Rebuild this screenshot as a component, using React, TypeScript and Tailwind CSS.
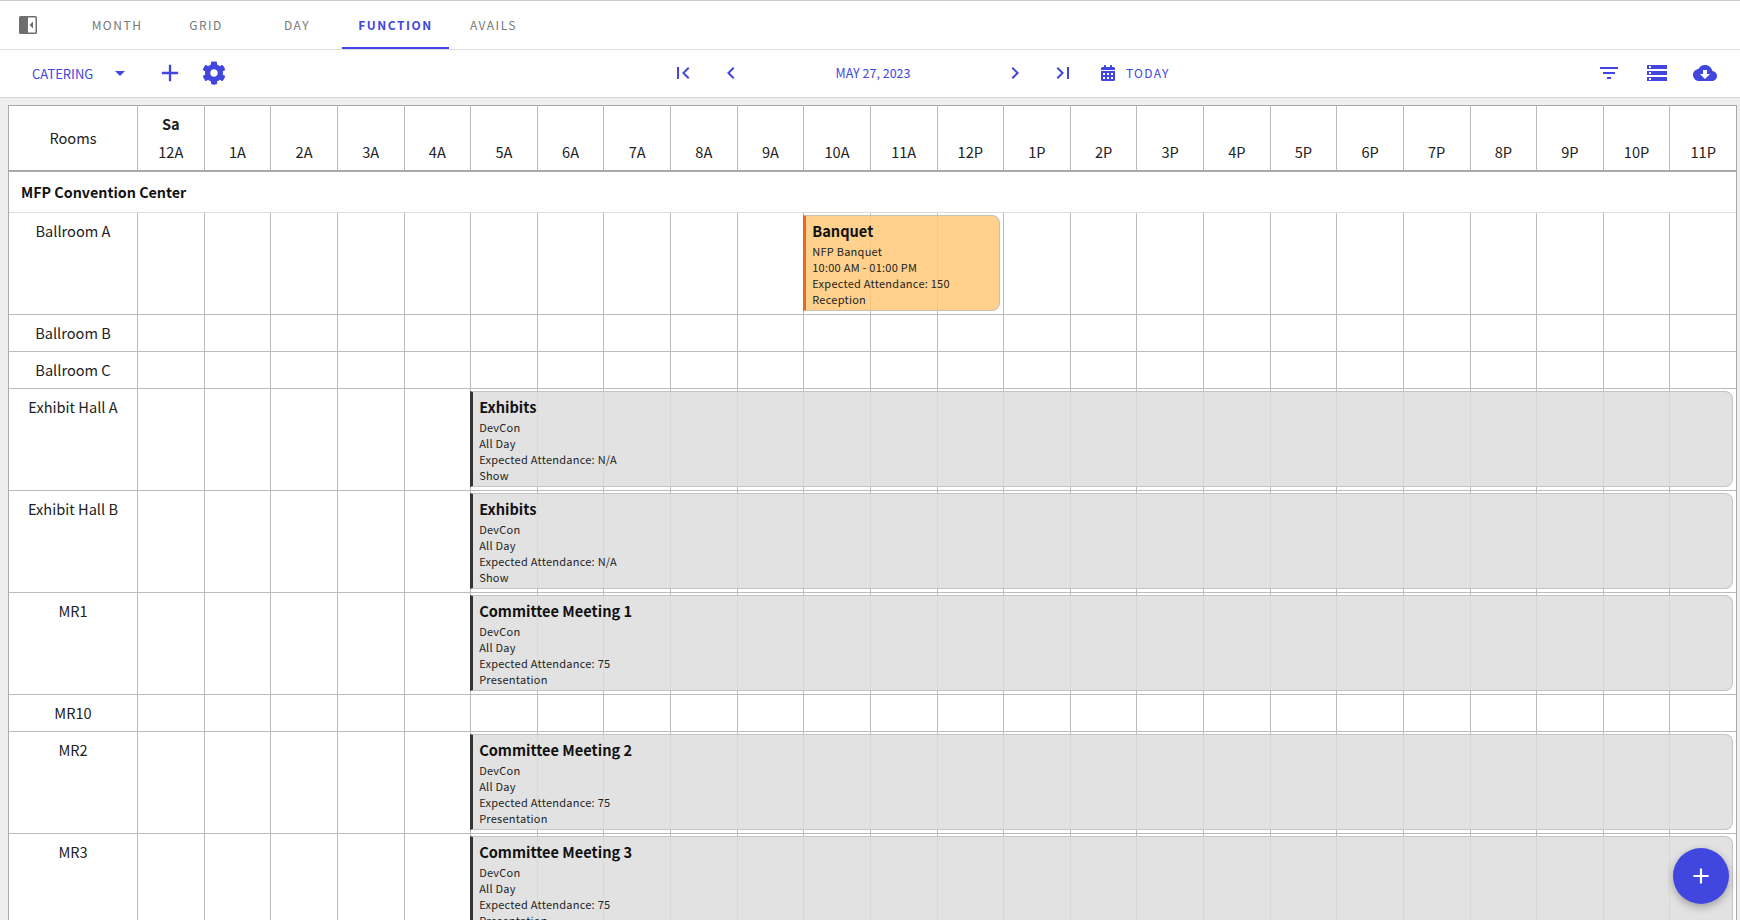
import { FaCalendarAlt, FaCog } from "react-icons/fa";

const hours = ["12A", "1A", "2A", "3A", "4A", "5A", "6A", "7A", "8A", "9A", "10A", "11A", "12P", "1P", "2P", "3P", "4P", "5P", "6P", "7P", "8P", "9P", "10P", "11P"];

type EventInfo = {
  title: string;
  group: string;
  time: string;
  attendance: string;
  kind: string;
  start: number;
  span: number;
  tone: "orange" | "gray";
};

type Room = { name: string; tall: boolean; event?: EventInfo };

const allDay = (title: string, attendance: string, kind: string): EventInfo => ({
  title,
  group: "DevCon",
  time: "All Day",
  attendance,
  kind,
  start: 5,
  span: 19,
  tone: "gray",
});

const rooms: Room[] = [
  {
    name: "Ballroom A",
    tall: true,
    event: {
      title: "Banquet",
      group: "NFP Banquet",
      time: "10:00 AM - 01:00 PM",
      attendance: "150",
      kind: "Reception",
      start: 10,
      span: 3,
      tone: "orange",
    },
  },
  { name: "Ballroom B", tall: false },
  { name: "Ballroom C", tall: false },
  { name: "Exhibit Hall A", tall: true, event: allDay("Exhibits", "N/A", "Show") },
  { name: "Exhibit Hall B", tall: true, event: allDay("Exhibits", "N/A", "Show") },
  { name: "MR1", tall: true, event: allDay("Committee Meeting 1", "75", "Presentation") },
  { name: "MR10", tall: false },
  { name: "MR2", tall: true, event: allDay("Committee Meeting 2", "75", "Presentation") },
  { name: "MR3", tall: true, event: allDay("Committee Meeting 3", "75", "Presentation") },
];

const tabs = [
  { label: "MONTH", width: "w-[86px]" },
  { label: "GRID", width: "w-[92px]" },
  { label: "DAY", width: "w-[90px]" },
  { label: "FUNCTION", width: "w-[107px]", active: true },
  { label: "AVAILS", width: "w-[89px]" },
];

const gridCols = "grid grid-cols-[128px_repeat(24,minmax(0,1fr))]";
const addPath = "M19 13h-6v6h-2v-6H5v-2h6V5h2v6h6v2z";

const MaterialIcon = ({ d, size = 24, className = "" }: { d: string; size?: number; className?: string }) => (
  <svg width={size} height={size} viewBox="0 0 24 24" fill="currentColor" className={`shrink-0 ${className}`}>
    <path d={d} />
  </svg>
);

const EventCard = ({ event }: { event: EventInfo }) => (
  <div
    className={`z-10 mt-[2px] mb-[3px] mr-[3px] overflow-hidden rounded-r-[8px] border border-l-[3px] pl-[6px] pt-[3px] text-[#222] ${
      event.tone === "orange" ? "border-[#c8c0b0] border-l-[#e8681f] bg-[#ffc978d9]" : "border-[#c4c4c4] border-l-[#333] bg-[#ddddddd9]"
    }`}
    style={{ gridColumn: `${event.start + 2} / span ${event.span}`, gridRow: 1 }}
  >
    <div className="text-[14.6px] font-bold leading-[24px] text-[#111]">{event.title}</div>
    <div className="text-[11px] leading-[16px] tracking-[0.25px]">{event.group}</div>
    <div className="text-[11px] leading-[16px] tracking-[0.25px]">{event.time}</div>
    <div className="text-[11px] leading-[16px] tracking-[0.25px]">Expected Attendance: {event.attendance}</div>
    <div className="text-[11px] leading-[16px] tracking-[0.25px]">{event.kind}</div>
  </div>
);

const RoomRow = ({ room }: { room: Room }) => (
  <div className={`${gridCols} border-b border-[#bbb] ${room.tall ? "h-[102px]" : "h-[37px]"}`}>
    <div className="pt-[6px] text-center text-[14.6px] leading-[24px] text-[#222]" style={{ gridColumn: 1, gridRow: 1 }}>
      {room.name}
    </div>
    {hours.map((hour, i) => (
      <div key={hour} className="border-l border-[#bbb]" style={{ gridColumn: i + 2, gridRow: 1 }} />
    ))}
    {room.event && <EventCard event={room.event} />}
  </div>
);

const App = () => {
  return (
    <div className="relative h-screen overflow-hidden bg-[#eeeeee] font-['Noto_Sans_CJK_JP','Source_Sans_Pro',sans-serif]">
      <div className="flex h-[50px] items-stretch border-y border-t-[#ccc] border-b-[#ddd] bg-white">
        <div className="flex w-[74px] items-center pl-[19px]">
          <svg width="18" height="18" viewBox="0 0 18 18" className="mb-[1px]">
            <rect x="0" y="0" width="18" height="18" rx="1.5" fill="#6e6e6e" />
            <rect x="9" y="1.5" width="7.5" height="15" fill="#fff" />
            <path d="M14 5.5v7L10.5 9z" fill="#6e6e6e" />
          </svg>
        </div>
        {tabs.map((tab) => (
          <div
            key={tab.label}
            className={`flex items-center justify-center border-b-2 pt-[2px] text-[12px] tracking-[1.5px] ${tab.width} ${
              tab.active ? "border-[#4146df] font-bold text-[#4146df]" : "border-transparent text-[#777]"
            }`}
          >
            {tab.label}
          </div>
        ))}
      </div>

      <div className="flex h-[48px] items-center border-b border-[#d4d4d4] bg-white pb-[1px] text-[#4146df]">
        <span className="ml-[32px] w-[60px] whitespace-nowrap text-[13px] leading-none">CATERING</span>
        <MaterialIcon d="M7 10l5 5 5-5z" className="ml-[16px]" />
        <MaterialIcon d={addPath} size={28} className="ml-[24px]" />
        <FaCog size={24} className="ml-[18px] shrink-0" />

        <MaterialIcon d="M18.41 16.59L13.82 12l4.59-4.59L17 6l-6 6 6 6zM6 6h2v12H6z" className="ml-[445px]" />
        <MaterialIcon d="M15.41 7.41L14 6l-6 6 6 6 1.41-1.41L10.83 12z" className="ml-[24px]" />
        <span className="ml-[91px] w-[78px] whitespace-nowrap text-center text-[12.5px] leading-none">MAY 27, 2023</span>
        <MaterialIcon d="M10 6L8.59 7.41 13.17 12l-4.58 4.59L10 18l6-6z" className="ml-[91px]" />
        <MaterialIcon d="M5.59 7.41L10.18 12l-4.59 4.59L7 18l6-6-6-6zM16 6h2v12h-2z" className="ml-[24px]" />
        <FaCalendarAlt size={16} className="ml-[25px] shrink-0" />
        <span className="ml-[10px] whitespace-nowrap text-[12px] leading-none tracking-[1.25px]">TODAY</span>

        <div className="ml-auto flex items-center gap-[24px] pr-[23px]">
          <MaterialIcon d="M10 18h4v-2h-4v2zM3 6v2h18V6H3zm3 7h12v-2H6v2z" />
          <MaterialIcon d="M2 20h20v-4H2v4zm2-3h2v2H4v-2zM2 4v4h20V4H2zm4 3H4V5h2v2zm-4 7h20v-4H2v4zm2-3h2v2H4v-2z" />
          <MaterialIcon d="M19.35 10.04C18.67 6.59 15.64 4 12 4 9.11 4 6.6 5.64 5.35 8.04 2.34 8.36 0 10.91 0 14c0 3.31 2.69 6 6 6h13c2.76 0 5-2.24 5-5 0-2.64-2.05-4.78-4.65-4.96zM17 13l-5 5-5-5h3V9h4v4h3z" />
        </div>
      </div>

      <div className="ml-[8px] mt-[7px] w-[1729px] border-x border-t border-[#aaa] bg-white">
        <div className={`${gridCols} h-[66px] border-b-2 border-[#aaa]`}>
          <div className="flex items-center justify-center pb-[1px] text-[14.6px] text-[#222]">Rooms</div>
          {hours.map((hour, i) => (
            <div key={hour} className="flex flex-col items-center justify-end border-l border-[#bbb] pb-[6px] text-[14.6px] leading-[24px] text-[#222]">
              {i === 0 && <span className="mb-[4px] font-bold">Sa</span>}
              <span>{hour}</span>
            </div>
          ))}
        </div>

        <div className="flex h-[41px] items-center border-b border-[#ddd] pl-[12px] text-[14.3px] font-bold text-[#111]">MFP Convention Center</div>

        {rooms.map((room) => (
          <RoomRow key={room.name} room={room} />
        ))}
      </div>

      <button className="absolute left-[1673px] top-[848px] z-20 flex h-[56px] w-[56px] items-center justify-center rounded-full bg-[#4146df] text-white shadow-[0_3px_8px_rgba(0,0,0,0.3)]">
        <MaterialIcon d={addPath} size={26} />
      </button>
    </div>
  );
};

export default App;
